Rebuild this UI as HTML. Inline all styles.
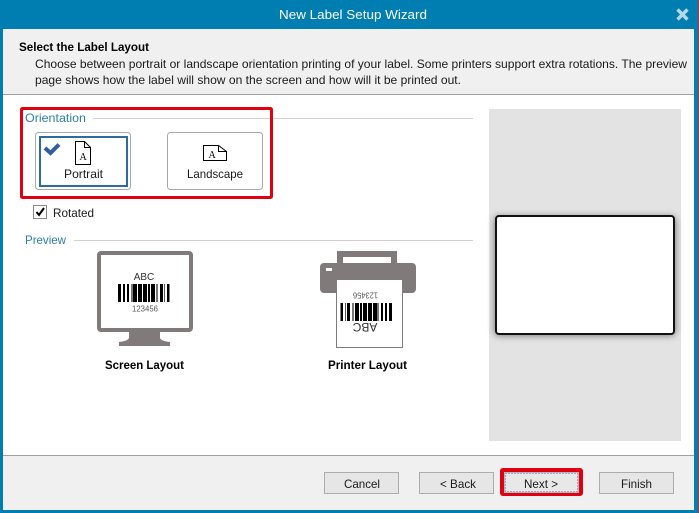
<!DOCTYPE html>
<html><head><meta charset="utf-8"><style>
html,body{margin:0;padding:0;background:#fff;width:699px;height:513px;overflow:hidden}
svg{display:block}
text{font-family:"Liberation Sans",sans-serif;font-size:12px;fill:#1a1a1a}
</style></head><body>
<svg width="699" height="513" viewBox="0 0 699 513" xmlns="http://www.w3.org/2000/svg">
<defs>
<filter id="sh" x="-15%" y="-20%" width="130%" height="140%"><feGaussianBlur stdDeviation="4"/></filter>
<g id="bars" fill="#000">
<rect x="0" width="3" height="18"/><rect x="5" width="2" height="18"/><rect x="9" width="2" height="18"/>
<rect x="13" width="2" height="18" fill="#777"/><rect x="15" width="4" height="18"/><rect x="20" width="4" height="18"/>
<rect x="25" width="4" height="18"/><rect x="30" width="2" height="18"/><rect x="33" width="4" height="18"/>
<rect x="38" width="2" height="18" fill="#777"/><rect x="42" width="3" height="18"/><rect x="46" width="1" height="18" fill="#555"/><rect x="49" width="2.500" height="18"/>
</g>
</defs>
<rect width="699" height="513" fill="#007db1"/>
<rect x="698" width="1" height="513" fill="#d8232a"/>
<rect x="3" y="29" width="691" height="481" fill="#fff"/>
<rect x="3" y="29" width="691" height="65" fill="#f0f0f0"/>
<rect x="3" y="94" width="691" height="1" fill="#a0a0a0"/>
<rect x="3" y="455" width="691" height="1" fill="#a0a0a0"/>
<rect x="3" y="456" width="691" height="54" fill="#f0f0f0"/>

<text x="279" y="19" textLength="148" lengthAdjust="spacingAndGlyphs" style="font-size:13px;fill:#fff">New Label Setup Wizard</text>
<path d="M677.500 9.500 L687.500 19.500 M687.500 9.500 L677.500 19.500" stroke="#b4d8e8" stroke-width="3.400" fill="none"/>

<text x="19" y="51" textLength="130" lengthAdjust="spacingAndGlyphs" style="font-weight:bold;fill:#000">Select the Label Layout</text>
<text x="35" y="68" textLength="652" lengthAdjust="spacingAndGlyphs">Choose between portrait or landscape orientation printing of your label. Some printers support extra rotations. The preview</text>
<text x="35" y="84" textLength="426" lengthAdjust="spacingAndGlyphs">page shows how the label will show on the screen and how will it be printed out.</text>

<rect x="93" y="118" width="380" height="1" fill="#d0d0d0"/>
<text x="25" y="122" textLength="61" lengthAdjust="spacingAndGlyphs" style="fill:#2c7fa8">Orientation</text>
<rect x="21.500" y="108.500" width="250" height="89" rx="1" fill="none" stroke="#e0000f" stroke-width="3"/>

<rect x="35.500" y="132.500" width="95" height="57" rx="3" fill="#fff" stroke="#a8a8a8"/>
<rect x="40" y="137" width="87" height="49" fill="#fff" stroke="#2e6c9e" stroke-width="2"/>
<path d="M45 148 L50.500 153 L59 144.500" fill="none" stroke="#2f5d9e" stroke-width="4"/>
<path d="M75.500 141.500 H84.500 L90.500 147.500 V164.500 H75.500 Z M84.500 141.500 V147.500 H90.500" fill="#fff" stroke="#000"/>
<text x="79.500" y="160" style="font-family:'Liberation Serif',serif;font-size:10px;fill:#000">A</text>
<text x="64" y="178" textLength="39" lengthAdjust="spacingAndGlyphs">Portrait</text>

<rect x="167.500" y="132.500" width="95" height="57" rx="3" fill="#fff" stroke="#a8a8a8"/>
<path d="M203.500 145.500 H218.500 L226.500 151.500 V160.500 H203.500 Z M218.500 145.500 V151.500 H226.500" fill="#fff" stroke="#000"/>
<text x="208.500" y="158" style="font-family:'Liberation Serif',serif;font-size:10px;fill:#000">A</text>
<text x="187" y="178" textLength="56" lengthAdjust="spacingAndGlyphs">Landscape</text>

<rect x="33.500" y="205.500" width="13" height="13" fill="#fff" stroke="#8a8a8a"/>
<path d="M36.500 212 L39 215 L44 208" fill="none" stroke="#000" stroke-width="2"/>
<text x="53" y="217" textLength="41" lengthAdjust="spacingAndGlyphs">Rotated</text>

<rect x="74" y="240" width="399" height="1" fill="#d0d0d0"/>
<text x="25" y="244" textLength="41" lengthAdjust="spacingAndGlyphs" style="fill:#2c7fa8">Preview</text>

<!-- monitor -->
<rect x="99" y="253" width="92" height="77" rx="2" fill="#fff" stroke="#807b7a" stroke-width="4"/>
<path d="M129 332 H160 V338 Q161 341 170 342 V346 H119 V342 Q128 341 129 338 Z" fill="#807b7a"/>
<text x="144" y="280" text-anchor="middle" style="font-size:10px;fill:#333">ABC</text>
<use href="#bars" x="118" y="284"/>
<text x="145" y="311.500" text-anchor="middle" textLength="26" lengthAdjust="spacingAndGlyphs" style="font-size:8px;fill:#555">123456</text>
<text x="105" y="369" textLength="79" lengthAdjust="spacingAndGlyphs" style="font-weight:bold;fill:#000">Screen Layout</text>

<!-- printer -->
<path d="M337 265 V251 H397 V265 H391 V257 H343 V265 Z" fill="#807b7a"/>
<rect x="320" y="263" width="96" height="30" rx="4" fill="#807b7a"/>
<rect x="326" y="268" width="6" height="3" fill="#fff"/>
<rect x="336" y="280" width="67" height="68" fill="#fff"/>
<path d="M336.500 280 V347.500 H402.500 V280" fill="none" stroke="#807b7a"/>
<g transform="rotate(180 366.500 312)"><use href="#bars" x="341" y="303"/></g>
<g transform="rotate(180 365.500 295.500)"><text x="365.500" y="298.500" text-anchor="middle" textLength="25" lengthAdjust="spacingAndGlyphs" style="font-size:8px;fill:#555">123456</text></g>
<g transform="rotate(180 365 327.500)"><text x="365" y="332" text-anchor="middle" style="font-size:12px;fill:#333">ABC</text></g>
<text x="328" y="369" textLength="79" lengthAdjust="spacingAndGlyphs" style="font-weight:bold;fill:#000">Printer Layout</text>

<!-- preview panel -->
<rect x="489" y="109" width="192" height="332" fill="#e3e3e3"/>
<rect x="495" y="217" width="180" height="118" rx="3" fill="#000" opacity=".55" filter="url(#sh)"/>
<rect x="496" y="216" width="178" height="118" rx="3" fill="#fff" stroke="#111" stroke-width="2"/>

<!-- buttons -->
<g fill="#e6e6e6" stroke="#acacac">
<rect x="324.500" y="472.500" width="74" height="21"/>
<rect x="419.500" y="472.500" width="74" height="21"/>
<rect x="599.500" y="472.500" width="74" height="21"/>
</g>
<rect x="502" y="470" width="79" height="24" rx="1" fill="#e8e8e8" stroke="#e0000f" stroke-width="4"/>
<rect x="504.500" y="472.500" width="74" height="20" fill="none" stroke="#a9b8cc"/>
<rect x="505.500" y="473.500" width="72" height="18" fill="none" stroke="#667" stroke-width="1" stroke-dasharray="1 2"/>
<text x="344" y="488" textLength="36" lengthAdjust="spacingAndGlyphs">Cancel</text>
<text x="440" y="488" textLength="36" lengthAdjust="spacingAndGlyphs">&lt; Back</text>
<text x="524" y="488" textLength="34" lengthAdjust="spacingAndGlyphs">Next &gt;</text>
<text x="621" y="488" textLength="31" lengthAdjust="spacingAndGlyphs">Finish</text>
</svg>
</body></html>
